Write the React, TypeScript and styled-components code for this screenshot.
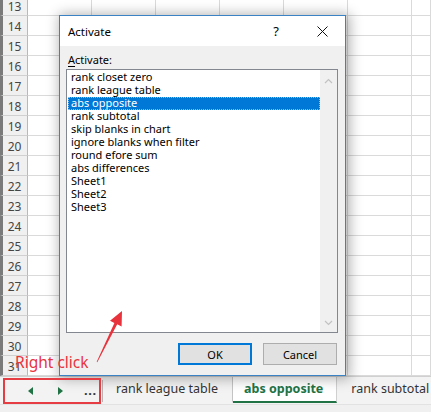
import React from "react";
import styled, { createGlobalStyle } from "styled-components";

const Global = createGlobalStyle`
  html, body {
    margin: 0;
    padding: 0;
    background: #ffffff;
  }
  body {
    width: 431px;
    height: 412px;
    overflow: hidden;
    font-family: "Noto Sans", "Open Sans", sans-serif;
  }
`;

const Screen = styled.div`
  position: relative;
  width: 431px;
  height: 412px;
  overflow: hidden;
  display: flex;
  flex-direction: column;
  background: #ffffff;
`;

/* ---------- worksheet grid ---------- */

const Sheet = styled.div`
  flex: none;
  height: 376px;
  overflow: hidden;
`;

const Rows = styled.div`
  margin-top: -4px;
  display: flex;
  flex-direction: column;
`;

const Row = styled.div`
  display: flex;
  height: 20px;
  flex: none;
`;

const RowHead = styled.div`
  box-sizing: border-box;
  width: 28px;
  flex: none;
  border-left: 3px solid #7a7a7a;
  border-right: 1px solid #b9b9b9;
  border-bottom: 1px solid #d0d0d0;
  background: #f0f0f0;
  color: #444444;
  font-size: 12px;
  line-height: 21px;
  text-align: center;
  padding-right: 1px;
`;

const Cell = styled.div<{ $grow?: boolean }>`
  box-sizing: border-box;
  width: 64px;
  flex: ${(p) => (p.$grow ? "1 1 auto" : "none")};
  border-right: 1px solid #dadada;
  border-bottom: 1px solid #dadada;
`;

/* ---------- sheet tabs ---------- */

const TabBar = styled.div`
  flex: none;
  box-sizing: border-box;
  height: 28px;
  border-top: 1px solid #d0d0d0;
  background: #f3f3f3;
  display: flex;
  align-items: stretch;
`;

const NavArea = styled.div`
  width: 102px;
  flex: none;
  display: flex;
  align-items: center;
`;

const NavButton = styled.div<{ $ml: number }>`
  margin-left: ${(p) => p.$ml}px;
  display: flex;
  align-items: center;
  color: #333333;
  font-size: 13px;
  font-weight: 700;
  letter-spacing: 0.6px;
  line-height: 1;
`;

const Divider = styled.div`
  width: 1px;
  flex: none;
  margin: 3px 0 2px;
  background: #b5b5b5;
`;

const Tab = styled.div<{ $active?: boolean; $last?: boolean; $pl: number; $pr: number }>`
  box-sizing: border-box;
  flex: none;
  display: flex;
  align-items: center;
  padding: 0 ${(p) => p.$pr}px 1px ${(p) => p.$pl}px;
  margin-bottom: 1px;
  font-size: 12.5px;
  color: ${(p) => (p.$active ? "#217346" : "#333333")};
  font-weight: ${(p) => (p.$active ? 700 : 400)};
  background: ${(p) => (p.$active ? "#ffffff" : "transparent")};
  border-right: ${(p) =>
    p.$last ? "none" : `1px solid ${p.$active ? "#d0d0d0" : "#c4c4c4"}`};
  border-bottom: 2px solid ${(p) => (p.$active ? "#217346" : "transparent")};
  white-space: nowrap;
`;

const Footer = styled.div`
  flex: 1;
  background: #f0f0f0;
  border-top: 1px solid #e2e2e2;
`;

/* ---------- Activate dialog ---------- */

const Dialog = styled.div`
  position: absolute;
  left: 59px;
  top: 15px;
  width: 287px;
  height: 361px;
  box-sizing: border-box;
  border: 1px solid #3b82c4;
  background: #f0f0f0;
  box-shadow: 2px 1px 12px 2px rgba(0, 0, 0, 0.3);
  display: flex;
  flex-direction: column;
  font-size: 11px;
  color: #000000;
`;

const TitleBar = styled.div`
  flex: none;
  height: 30px;
  background: #ffffff;
  display: flex;
  align-items: center;
  padding: 0 0 0 8px;
`;

const Title = styled.div`
  flex: 1;
  font-size: 11.5px;
`;

const TitleButton = styled.div`
  width: 46px;
  display: flex;
  justify-content: center;
  align-items: center;
  font-size: 13px;
`;

const Body = styled.div`
  flex: 1;
  display: flex;
  flex-direction: column;
  padding: 7px 7px 10px 6px;
`;

const Label = styled.div`
  height: 14px;
  line-height: 14px;
  padding-left: 2px;
  margin-bottom: 2px;
  & u {
    text-decoration-thickness: 1px;
    text-underline-offset: 2px;
  }
`;

const ListBox = styled.div`
  box-sizing: border-box;
  width: 272px;
  height: 264px;
  border: 1px solid #828790;
  background: #ffffff;
  display: flex;
`;

const Items = styled.div`
  flex: 1;
  padding: 1px 0 0 1px;
  display: flex;
  flex-direction: column;
`;

const Item = styled.div<{ $selected?: boolean }>`
  box-sizing: border-box;
  height: 13px;
  line-height: 12px;
  padding-left: 3px;
  white-space: nowrap;
  color: ${(p) => (p.$selected ? "#ffffff" : "#000000")};
  background: ${(p) => (p.$selected ? "#0078d7" : "transparent")};
  outline: ${(p) => (p.$selected ? "1px dotted #8fc0ea" : "none")};
  outline-offset: -1px;
`;

const ScrollTrack = styled.div`
  width: 17px;
  flex: none;
  background: #f0f0f0;
  display: flex;
  flex-direction: column;
  justify-content: space-between;
  align-items: center;
  padding: 8px 0 6px;
`;

const Buttons = styled.div`
  margin-top: 10px;
  display: flex;
  justify-content: flex-end;
  gap: 11px;
  padding-right: 1px;
`;

const Button = styled.div<{ $default?: boolean }>`
  box-sizing: border-box;
  width: 74px;
  height: 22px;
  display: flex;
  align-items: center;
  justify-content: center;
  background: #e1e1e1;
  border: ${(p) => (p.$default ? "2px solid #0078d7" : "1px solid #adadad")};
  font-size: 11px;
`;

/* ---------- callout ---------- */

const Callout = styled.div`
  position: absolute;
  left: 15px;
  top: 352px;
  color: #e8343f;
  font-size: 15.5px;
  line-height: 20px;
  white-space: nowrap;
`;

const Frame = styled.div`
  position: absolute;
  left: 3px;
  top: 378px;
  width: 98px;
  height: 26px;
  box-sizing: border-box;
  border: 2px solid #e63c44;
`;

const ArrowLayer = styled.svg`
  position: absolute;
  left: 0;
  top: 0;
  pointer-events: none;
`;

const sheetRows = Array.from({ length: 19 }, (_, i) => 13 + i);
const columns = 6;

const sheets = [
  "rank closet zero",
  "rank league table",
  "abs opposite",
  "rank subtotal",
  "skip blanks in chart",
  "ignore blanks when filter",
  "round efore sum",
  "abs differences",
  "Sheet1",
  "Sheet2",
  "Sheet3",
];

const Chevron = ({ up }: { up?: boolean }) => (
  <svg width="9" height="6" viewBox="0 0 9 6">
    <path
      d={up ? "M1 5 L4.5 1.5 L8 5" : "M1 1 L4.5 4.5 L8 1"}
      fill="none"
      stroke="#c2c2c2"
      strokeWidth="1.2"
    />
  </svg>
);

const Triangle = ({ left }: { left?: boolean }) => (
  <svg width="5" height="8" viewBox="0 0 5 8">
    <path d={left ? "M5 0 L0 4 L5 8 Z" : "M0 0 L5 4 L0 8 Z"} fill="#217346" />
  </svg>
);

export default function App() {
  return (
    <Screen>
      <Global />
      <Sheet>
        <Rows>
          {sheetRows.map((n) => (
            <Row key={n}>
              <RowHead>{n}</RowHead>
              {Array.from({ length: columns }, (_, c) => (
                <Cell key={c} />
              ))}
              <Cell $grow />
            </Row>
          ))}
        </Rows>
      </Sheet>

      <TabBar>
        <NavArea>
          <NavButton $ml={28}>
            <Triangle left />
          </NavButton>
          <NavButton $ml={25}>
            <Triangle />
          </NavButton>
          <NavButton $ml={21}>...</NavButton>
        </NavArea>
        <Divider />
        <Tab $pl={13} $pr={14}>rank league table</Tab>
        <Tab $active $pl={11} $pr={13}>abs opposite</Tab>
        <Tab $last $pl={14} $pr={0}>rank subtotal</Tab>
      </TabBar>
      <Footer />

      <Dialog>
        <TitleBar>
          <Title>Activate</Title>
          <TitleButton>?</TitleButton>
          <TitleButton>
            <svg width="11" height="11" viewBox="0 0 11 11">
              <path d="M0.5 0.5 L10.5 10.5 M10.5 0.5 L0.5 10.5" stroke="#111" strokeWidth="1" />
            </svg>
          </TitleButton>
        </TitleBar>
        <Body>
          <Label>
            <u>A</u>ctivate:
          </Label>
          <ListBox>
            <Items>
              {sheets.map((s) => (
                <Item key={s} $selected={s === "abs opposite"}>
                  {s}
                </Item>
              ))}
            </Items>
            <ScrollTrack>
              <Chevron up />
              <Chevron />
            </ScrollTrack>
          </ListBox>
          <Buttons>
            <Button $default>OK</Button>
            <Button>Cancel</Button>
          </Buttons>
        </Body>
      </Dialog>

      <Callout>Right click</Callout>
      <Frame />
      <ArrowLayer width="431" height="412" viewBox="0 0 431 412">
        <polygon
          points="122,311 121.6,326.5 117.2,324.3 97.3,362.2 96.7,361.8 114.4,322.9 110,320.7"
          fill="#e8323c"
        />
      </ArrowLayer>
    </Screen>
  );
}
